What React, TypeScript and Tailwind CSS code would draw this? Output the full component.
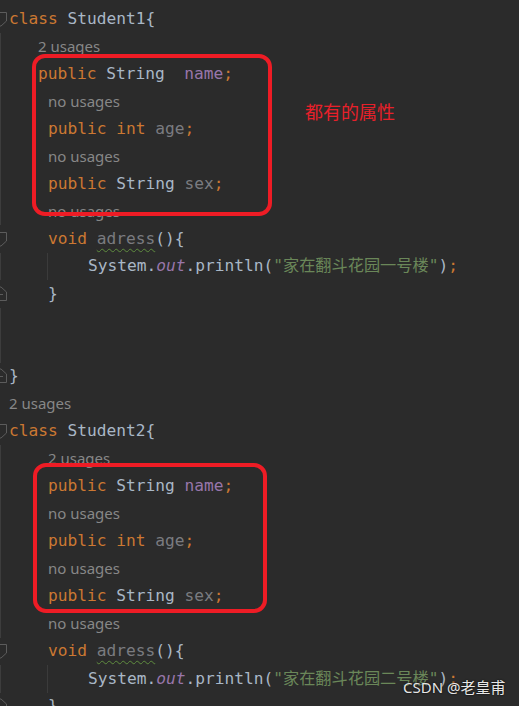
import React from "react";

type Seg = { t: string; c: string; extra?: string };

const K = "text-[#cc7832]";
const I = "text-[#a9b7c6]";
const F = "text-[#9876aa]";
const U = "text-[#7a7b80]";
const S = "text-[#6a8759]";

function FoldStart() {
  return (
    <svg width="9" height="16" viewBox="0 0 9 16" className="block">
      <polygon points="-5,1.5 6.5,1.5 6.5,10 1,15 -5,15" fill="none" stroke="#5c5c5c" strokeWidth="1" />
    </svg>
  );
}
function FoldEnd() {
  return (
    <svg width="9" height="16" viewBox="0 0 9 16" className="block">
      <polygon points="-5,1 1,1 6.5,6 6.5,14.5 -5,14.5" fill="none" stroke="#5c5c5c" strokeWidth="1" />
      <line x1="-3" y1="8.5" x2="3" y2="8.5" stroke="#5c5c5c" strokeWidth="1" />
    </svg>
  );
}

function Code({ segs }: { segs: Seg[] }) {
  return (
    <span className="whitespace-pre font-['DejaVu_Sans_Mono','Liberation_Mono','Noto_Sans_CJK_SC',monospace] text-[16.2px] leading-none">
      {segs.map((s, i) => (
        <span key={i} className={s.c + " " + (s.extra ?? "")}>
          {s.t}
        </span>
      ))}
    </span>
  );
}

function Hint({ text }: { text: string }) {
  return (
    <span className="whitespace-pre font-['Noto_Sans',sans-serif] text-[15px] leading-none text-[#878787]">
      {text}
    </span>
  );
}

function Row({
  children,
  fold,
  rail = true,
  pad,
  guide = false,
}: {
  children?: React.ReactNode;
  fold?: "start" | "end";
  rail?: boolean;
  pad: string;
  guide?: boolean;
}) {
  return (
    <div className="flex h-[27.5px] items-center">
      <div className={"flex h-full w-[9px] shrink-0 items-center " + (rail && !fold ? "border-l border-[#3d3d3d]" : "")}>
        {fold === "start" ? <FoldStart /> : fold === "end" ? <FoldEnd /> : null}
      </div>
      <div className={"relative flex h-full items-center " + pad}>
        {guide ? <div className="absolute left-[38px] top-0 h-full w-px bg-[#3b3b3b]" /> : null}
        {children}
      </div>
    </div>
  );
}

function Method({ house }: { house: string }) {
  return (
    <>
      <Row fold="start" pad="pl-[39px]">
        <Code
          segs={[
            { t: "void ", c: K },
            { t: "adress", c: U, extra: "underline decoration-wavy decoration-[#5f8c3f] decoration-1 underline-offset-[4px]" },
            { t: "(){", c: I },
          ]}
        />
      </Row>
      <Row pad="pl-[79px] w-[500px]" guide>
        <Code
          segs={[
            { t: "System.", c: I },
            { t: "out", c: F, extra: "italic" },
            { t: ".println(", c: I },
            { t: "\"" + house + "\"", c: S },
            { t: ")", c: I },
            { t: ";", c: K },
          ]}
        />
      </Row>
    </>
  );
}

export default function App() {
  return (
    <div className="relative h-[706px] w-[519px] overflow-hidden bg-[#2b2b2b]">
      <div className="flex flex-col pt-[5px]">
        <Row fold="start" pad="pl-0">
          <Code segs={[{ t: "class ", c: K }, { t: "Student1{", c: I }]} />
        </Row>
        <Row pad="pl-[29px]">
          <Hint text="2 usages" />
        </Row>
        <Row pad="pl-[29px]">
          <Code segs={[{ t: "public ", c: K }, { t: "String  ", c: I }, { t: "name", c: F }, { t: ";", c: K }]} />
        </Row>
        <Row pad="pl-[39px]">
          <Hint text="no usages" />
        </Row>
        <Row pad="pl-[39px]">
          <Code segs={[{ t: "public int ", c: K }, { t: "age", c: U }, { t: ";", c: K }]} />
        </Row>
        <Row pad="pl-[39px]">
          <Hint text="no usages" />
        </Row>
        <Row pad="pl-[39px]">
          <Code segs={[{ t: "public ", c: K }, { t: "String ", c: I }, { t: "sex", c: U }, { t: ";", c: K }]} />
        </Row>
        <Row pad="pl-[39px]">
          <Hint text="no usages" />
        </Row>
        <Method house="家在翻斗花园一号楼" />
        <Row fold="end" pad="pl-[39px]">
          <Code segs={[{ t: "}", c: I }]} />
        </Row>
        <Row pad="pl-0" />
        <Row pad="pl-0" />
        <Row fold="end" pad="pl-0">
          <Code segs={[{ t: "}", c: I }]} />
        </Row>
        <Row rail={false} pad="pl-0">
          <Hint text="2 usages" />
        </Row>
        <Row fold="start" pad="pl-0">
          <Code segs={[{ t: "class ", c: K }, { t: "Student2{", c: I }]} />
        </Row>
        <Row pad="pl-[39px]">
          <Hint text="2 usages" />
        </Row>
        <Row pad="pl-[39px]">
          <Code segs={[{ t: "public ", c: K }, { t: "String ", c: I }, { t: "name", c: F }, { t: ";", c: K }]} />
        </Row>
        <Row pad="pl-[39px]">
          <Hint text="no usages" />
        </Row>
        <Row pad="pl-[39px]">
          <Code segs={[{ t: "public int ", c: K }, { t: "age", c: U }, { t: ";", c: K }]} />
        </Row>
        <Row pad="pl-[39px]">
          <Hint text="no usages" />
        </Row>
        <Row pad="pl-[39px]">
          <Code segs={[{ t: "public ", c: K }, { t: "String ", c: I }, { t: "sex", c: U }, { t: ";", c: K }]} />
        </Row>
        <Row pad="pl-[39px]">
          <Hint text="no usages" />
        </Row>
        <Method house="家在翻斗花园二号楼" />
        <Row fold="end" pad="pl-[39px]">
          <Code segs={[{ t: "}", c: I }]} />
        </Row>
      </div>

      {/* annotation boxes */}
      <div className="absolute left-[32px] top-[54px] h-[162px] w-[240px] rounded-[13px] border-[4px] border-[#ee1c25]" />
      <div className="absolute left-[33px] top-[463px] h-[150px] w-[234px] rounded-[13px] border-[4px] border-[#ee1c25]" />
      <div className="absolute left-[305px] top-[102px] font-['Noto_Sans_CJK_SC',sans-serif] text-[18px] leading-none text-[#e8202a]">
        都有的属性
      </div>

      {/* watermark */}
      <div className="absolute left-[403px] top-[680px] font-['Noto_Sans','Noto_Sans_CJK_SC',sans-serif] text-[15px] leading-none text-[#e6e6e6] [text-shadow:0_0_2px_#000]">
        CSDN @老皇甫
      </div>
    </div>
  );
}
